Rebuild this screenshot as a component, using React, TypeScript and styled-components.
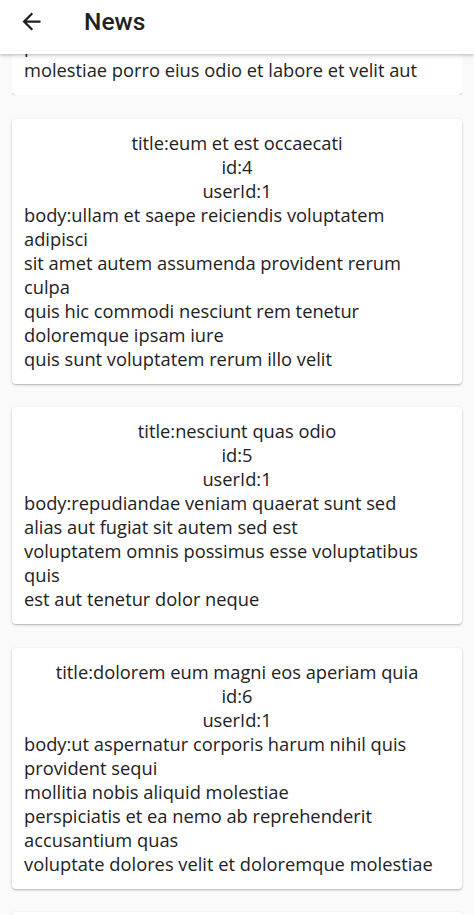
import React from "react";
import styled, { createGlobalStyle } from "styled-components";

const Global = createGlobalStyle`
  html, body { margin: 0; padding: 0; background: #fafafa; }
  body { font-family: "Open Sans", "Noto Sans", sans-serif; color: #212121; }
  * { box-sizing: border-box; }
`;

const Screen = styled.div`
  position: relative;
  width: 474px;
  height: 915px;
  overflow: hidden;
  background: #fafafa;
  display: flex;
  flex-direction: column;
`;

const AppBar = styled.header`
  position: relative;
  z-index: 2;
  flex: 0 0 54px;
  height: 54px;
  background: #ffffff;
  display: flex;
  align-items: flex-start;
  padding: 8px 0 0 18px;
  box-shadow: 0 2px 4px rgba(0, 0, 0, 0.16), 0 1px 2px rgba(0, 0, 0, 0.1);
`;

const BackButton = styled.div`
  width: 27px;
  height: 27px;
  display: flex;
  align-items: center;
  justify-content: center;
  color: #212121;
`;

const Title = styled.h1`
  margin: 0 0 0 39px;
  font-family: Roboto, "Noto Sans", sans-serif;
  font-weight: 500;
  font-size: 24.5px;
  line-height: 27px;
  color: #212121;
  letter-spacing: 0;
`;

const DebugBanner = styled.div`
  position: absolute;
  top: -30px;
  right: -62px;
  width: 120px;
  height: 26px;
  background: rgba(183, 28, 28, 0.82);
  transform: rotate(45deg);
  z-index: 3;
`;

const List = styled.main`
  flex: 1 1 auto;
  overflow: hidden;
  display: flex;
  flex-direction: column;
  gap: 23.5px;
  padding: 0 12px;
`;

const ScrolledTop = styled.div`
  height: 41px;
  overflow: hidden;
  display: flex;
  flex-direction: column;
  justify-content: flex-end;
  flex: 0 0 auto;
`;

const Card = styled.article`
  flex: 0 0 auto;
  background: #ffffff;
  border-radius: 4px;
  padding: 12px 12px 13px;
  box-shadow: 0 1px 3px rgba(0, 0, 0, 0.2), 0 1px 1px rgba(0, 0, 0, 0.12);
  font-size: 18.3px;
  line-height: 24px;
  color: #212121;
`;

const Center = styled.div`
  text-align: center;
`;

const Body = styled.div`
  text-align: left;
  white-space: pre-line;
`;

type Post = { id: number; title: string; body: string };

const posts: Post[] = [
  {
    id: 3,
    title: "ea molestias quasi exercitationem repellat qui ipsa sit aut",
    body:
      "et iusto sed quo iure\nvoluptatem occaecati omnis eligendi aut ad\nvoluptatem doloribus vel accusantium quis pariatur\nmolestiae porro eius odio et labore et velit aut",
  },
  {
    id: 4,
    title: "eum et est occaecati",
    body:
      "ullam et saepe reiciendis voluptatem adipisci\nsit amet autem assumenda provident rerum culpa\nquis hic commodi nesciunt rem tenetur doloremque ipsam iure\nquis sunt voluptatem rerum illo velit",
  },
  {
    id: 5,
    title: "nesciunt quas odio",
    body:
      "repudiandae veniam quaerat sunt sed\nalias aut fugiat sit autem sed est\nvoluptatem omnis possimus esse voluptatibus quis\nest aut tenetur dolor neque",
  },
  {
    id: 6,
    title: "dolorem eum magni eos aperiam quia",
    body:
      "ut aspernatur corporis harum nihil quis provident sequi\nmollitia nobis aliquid molestiae\nperspiciatis et ea nemo ab reprehenderit accusantium quas\nvoluptate dolores velit et doloremque molestiae",
  },
  {
    id: 7,
    title: "magnam facilis autem",
    body:
      "dolore placeat quibusdam ea quo vitae\nmagni quis enim qui quis quo nemo aut saepe\nquidem repellat excepturi ut quia\nsunt ut sequi eos ea sed quas",
  },
];

const PostCard: React.FC<{ post: Post }> = ({ post }) => (
  <Card>
    <Center>title:{post.title}</Center>
    <Center>id:{post.id}</Center>
    <Center>userId:1</Center>
    <Body>body:{post.body}</Body>
  </Card>
);

export default function App() {
  const [first, ...rest] = posts;
  return (
    <Screen>
      <Global />
      <AppBar>
        <BackButton>
          <svg width="27" height="27" viewBox="0 0 24 24" fill="currentColor">
            <path d="M20 11H7.83l5.59-5.59L12 4l-8 8 8 8 1.41-1.41L7.83 13H20v-2z" />
          </svg>
        </BackButton>
        <Title>News</Title>
      </AppBar>
      <DebugBanner />
      <List>
        <ScrolledTop>
          <PostCard post={first} />
        </ScrolledTop>
        {rest.map((p) => (
          <PostCard key={p.id} post={p} />
        ))}
      </List>
    </Screen>
  );
}
